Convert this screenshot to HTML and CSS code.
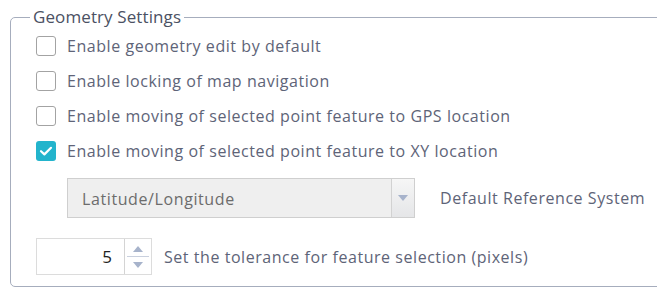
FILE: index.html
```html
<!DOCTYPE html>
<html>
<head>
<meta charset="utf-8">
<link rel="stylesheet" href="styles.css">
</head>
<body>
<fieldset class="settings">
  <legend class="settings-title">Geometry Settings</legend>
  <div class="check-row">
    <span class="checkbox"></span>
    <span class="label">Enable geometry edit by default</span>
  </div>
  <div class="check-row">
    <span class="checkbox"></span>
    <span class="label">Enable locking of map navigation</span>
  </div>
  <div class="check-row">
    <span class="checkbox"></span>
    <span class="label">Enable moving of selected point feature to GPS location</span>
  </div>
  <div class="check-row">
    <span class="checkbox checked">
      <svg viewBox="0 0 20 20" width="20" height="20"><path d="M5 10.2 L8.4 13.4 L15 6.8" fill="none" stroke="#fff" stroke-width="2.2" stroke-linecap="round" stroke-linejoin="round"/></svg>
    </span>
    <span class="label">Enable moving of selected point feature to XY location</span>
  </div>
  <div class="select-row">
    <div class="select">
      <span class="select-value">Latitude/Longitude</span>
      <span class="select-arrow"><svg viewBox="0 0 10 6" width="10" height="6"><path d="M0 0 H10 L5 6 Z" fill="#a7b3cb"/></svg></span>
    </div>
    <span class="label">Default Reference System</span>
  </div>
  <div class="number-row">
    <div class="number">
      <span class="number-value">5</span>
      <span class="spinner">
        <span class="spin up"><svg viewBox="0 0 10 6" width="10" height="6"><path d="M0 6 H10 L5 0 Z" fill="#a7b3cb"/></svg></span>
        <span class="spin down"><svg viewBox="0 0 10 6" width="10" height="6"><path d="M0 0 H10 L5 6 Z" fill="#a7b3cb"/></svg></span>
      </span>
    </div>
    <span class="label">Set the tolerance for feature selection (pixels)</span>
  </div>
</fieldset>
</body>
</html>
```

FILE: styles.css
```css
html, body {
  margin: 0;
  padding: 0;
  background: #fff;
  overflow: hidden;
}
body {
  width: 657px;
  height: 300px;
  font-family: "Open Sans", Lato, sans-serif;
}
.settings {
  box-sizing: border-box;
  margin: 7px 0 0 10px;
  width: 660px;
  height: 280px;
  border: 1px solid #a6adbd;
  border-radius: 5px;
  padding: 1px 0 0 19px;
}
.settings-title {
  padding: 0 3px;
  font-size: 17px;
  line-height: 20px;
  letter-spacing: 0.1px;
  color: #4b5163;
}
.check-row {
  display: flex;
  align-items: center;
  height: 35px;
  padding-left: 6px;
  gap: 11px;
}
.checkbox {
  box-sizing: border-box;
  width: 20px;
  height: 20px;
  border: 1.5px solid #a3a3a3;
  border-radius: 3px;
  background: #fff;
  display: flex;
  align-items: center;
  justify-content: center;
}
.checkbox.checked {
  border: none;
  background: #23b4cc;
}
.label {
  font-size: 16px;
  letter-spacing: 0.55px;
  color: #5e6478;
  white-space: nowrap;
}
.select-row {
  display: flex;
  align-items: center;
  margin-top: 10px;
  padding-left: 37px;
  gap: 25px;
}
.select {
  box-sizing: border-box;
  width: 348px;
  height: 40px;
  border: 1px solid #cfcfcf;
  background: #efefef;
  display: flex;
  align-items: stretch;
}
.select-value {
  flex: 1;
  display: flex;
  align-items: center;
  padding-left: 14px;
  padding-top: 2px;
  font-size: 16px;
  letter-spacing: 0.6px;
  color: #6c6c6c;
}
.select-arrow {
  width: 22px;
  border-left: 1px solid #d2d2d2;
  background: linear-gradient(#f6f6f6, #e5e6e8);
  display: flex;
  align-items: center;
  justify-content: center;
}
.number-row {
  display: flex;
  align-items: center;
  margin-top: 20px;
  padding-left: 6px;
  gap: 12px;
}
.number {
  box-sizing: border-box;
  width: 116px;
  height: 37px;
  border: 1px solid #dcdcdc;
  background: #fff;
  display: flex;
}
.number-value {
  flex: 1;
  display: flex;
  align-items: center;
  justify-content: flex-end;
  padding-right: 12px;
  font-size: 17px;
  color: #222;
  border-right: 1px solid #d4d4d4;
}
.spinner {
  width: 26px;
  display: flex;
  flex-direction: column;
  padding: 2px;
  box-sizing: border-box;
}
.spin {
  flex: 1;
  display: flex;
  align-items: center;
  justify-content: center;
}
.spin.up {
  border-bottom: 1px solid #c9d0de;
}
```
